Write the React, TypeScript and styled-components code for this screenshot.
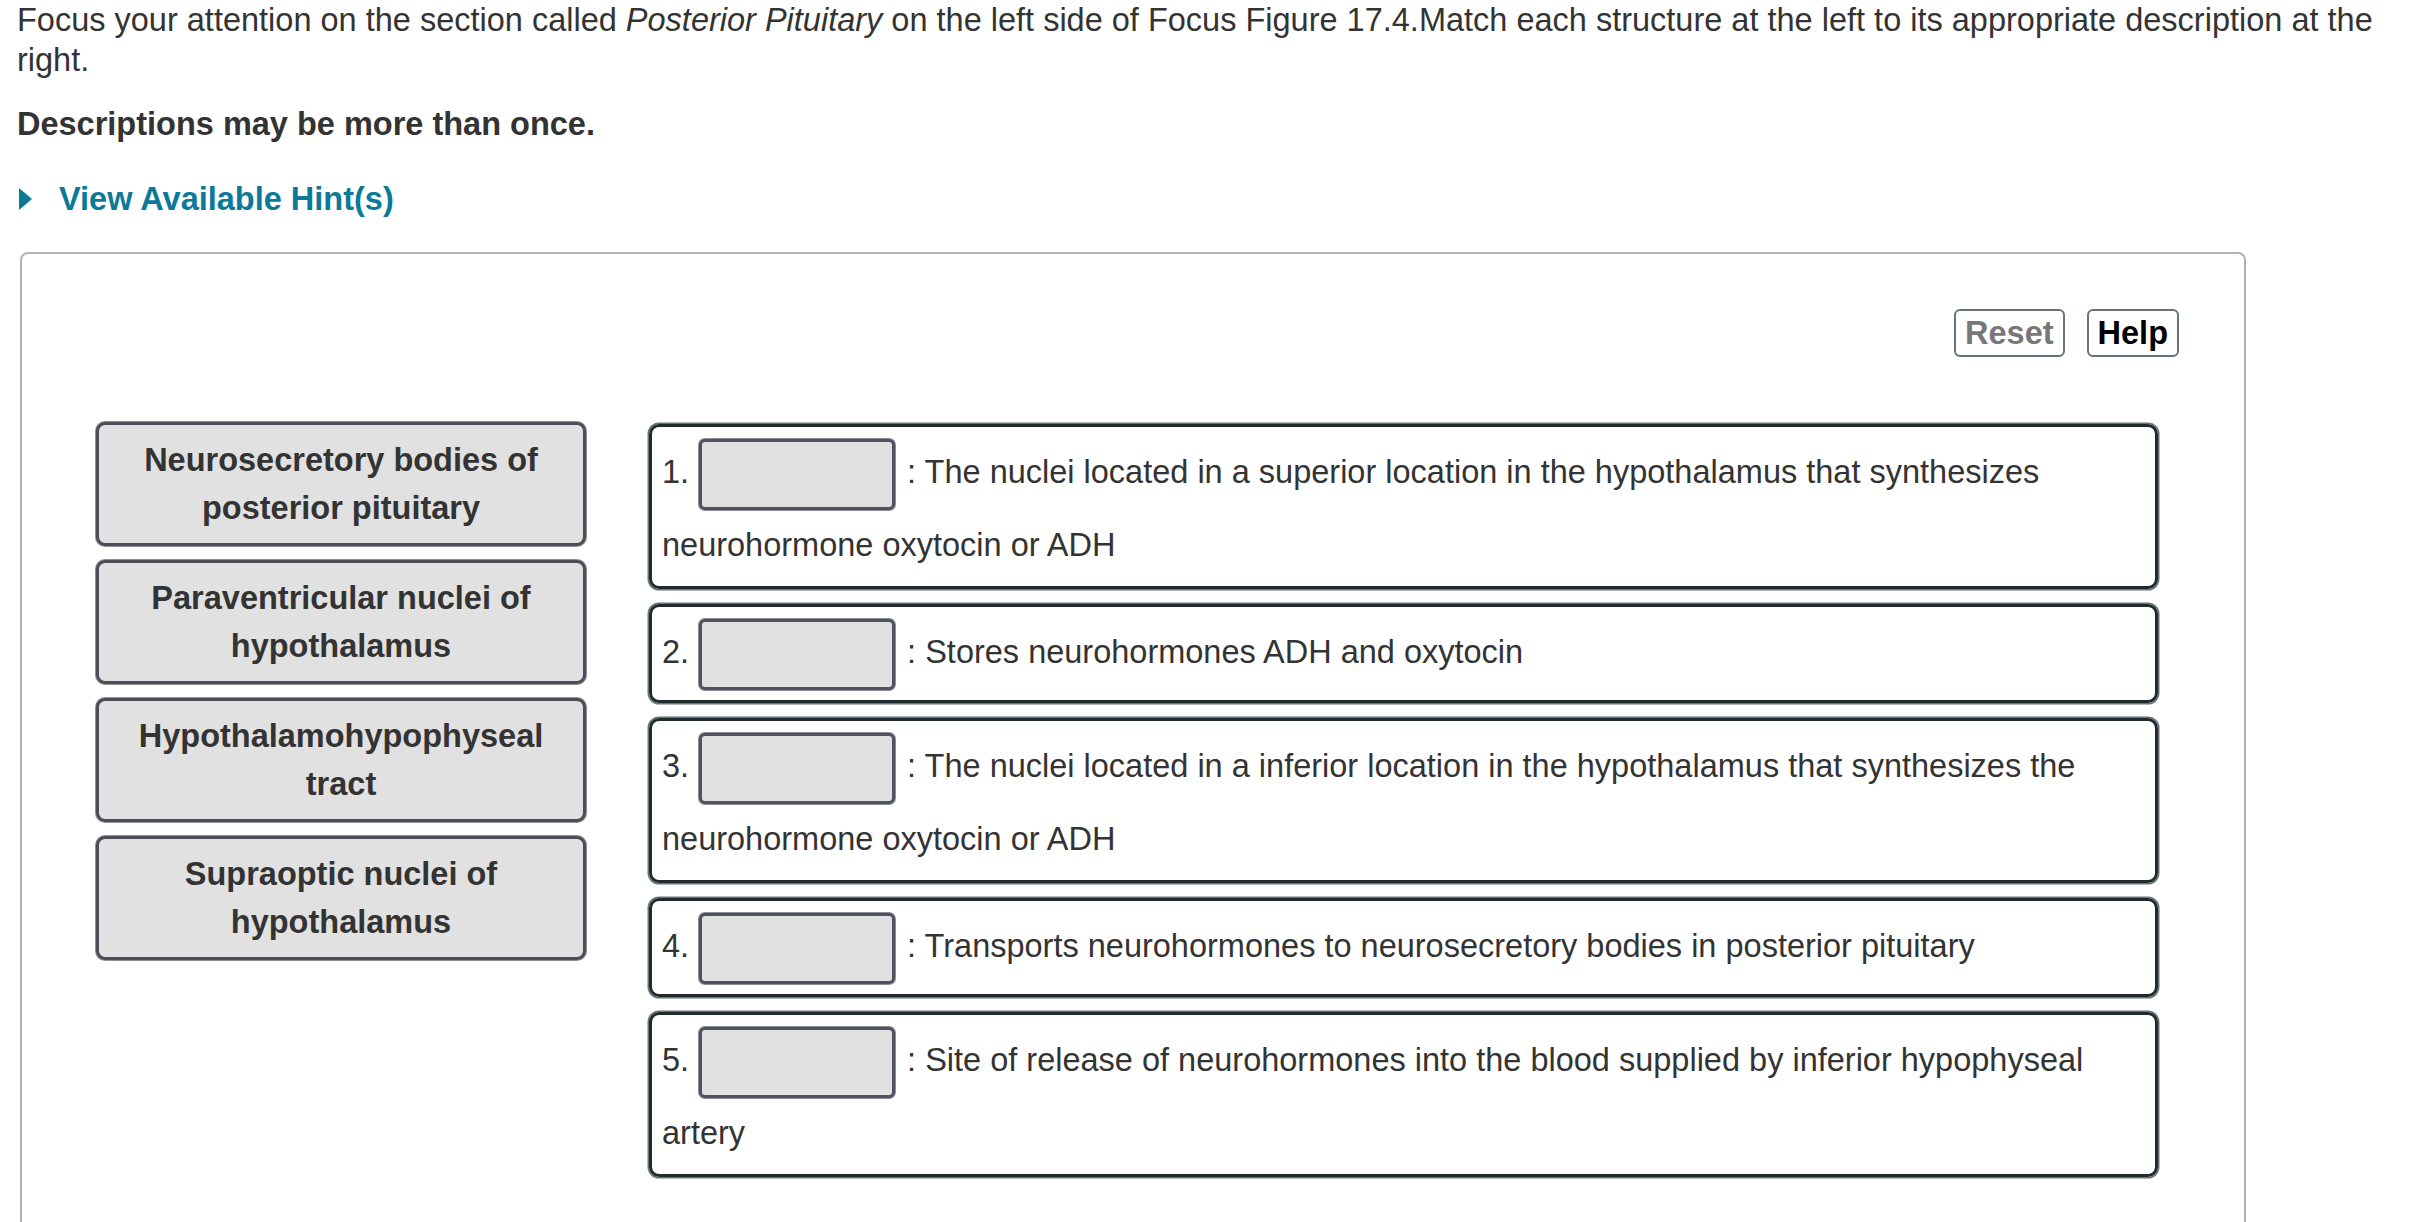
import React from "react";
import styled, { createGlobalStyle } from "styled-components";

const Global = createGlobalStyle`
  html, body { margin: 0; padding: 0; background: #fff; }
  body { font-family: "Liberation Sans", Arial, Helvetica, sans-serif; }
`;

const Page = styled.div`
  padding: 0 18px 0 17px;
  font-family: "Liberation Sans", Arial, Helvetica, sans-serif;
  color: #333;
  font-size: 32.5px;
  line-height: 40px;
  height: 1222px;
  overflow: hidden;
  box-sizing: border-box;
`;

const Intro = styled.p`
  margin: 0;
`;

const Note = styled.p`
  margin: 24px 0 0;
  font-weight: bold;
`;

const HintToggle = styled.div`
  display: flex;
  align-items: center;
  height: 40px;
  margin-top: 35px;
  color: #0a7a98;
  font-weight: bold;
  cursor: pointer;
`;

const HintText = styled.span`
  margin-left: 27px;
`;

const Panel = styled.div`
  margin: 33px 0 0 3px;
  width: 2226px;
  box-sizing: border-box;
  border: 2px solid #b3b3b3;
  border-bottom: none;
  border-radius: 8px 8px 0 0;
  padding: 55px 65px 300px 74px;
`;

const Toolbar = styled.div`
  display: flex;
  justify-content: flex-end;
  gap: 22px;
`;

const ToolButton = styled.button<{ $disabled?: boolean }>`
  height: 48px;
  padding: 0 9px;
  border: 2px solid #66757b;
  border-radius: 6px;
  background: #fff;
  font-family: "Liberation Sans", Arial, Helvetica, sans-serif;
  font-size: 32.5px;
  font-weight: bold;
  line-height: 44px;
  color: ${(p) => (p.$disabled ? "#777" : "#000")};
`;

const Board = styled.div`
  display: grid;
  grid-template-columns: 490px 1509px;
  column-gap: 63px;
  margin-top: 65px;
  align-items: start;
`;

const LabelColumn = styled.div`
  display: flex;
  flex-direction: column;
  gap: 14px;
`;

const Label = styled.div`
  box-sizing: border-box;
  border: 3px solid #4c4d56;
  box-shadow: 0 0 0 1px #8e8f98;
  border-radius: 9px;
  background: #e1e1e1;
  padding: 11px 6px;
  text-align: center;
  font-weight: bold;
  line-height: 48px;
  color: #333;
`;

const TargetColumn = styled.div`
  display: flex;
  flex-direction: column;
  gap: 15px;
  margin-top: 2px;
`;

const Card = styled.div`
  box-sizing: border-box;
  border: 3px solid #222a2d;
  box-shadow: 0 0 0 1.5px #66747a;
  border-radius: 10px;
  padding: 10px 10px 8px 10px;
  line-height: 66px;
  color: #333;
`;

const DropBox = styled.span`
  display: inline-block;
  vertical-align: middle;
  box-sizing: border-box;
  width: 196px;
  height: 71px;
  margin: 2px 12px 2px 10px;
  background: #e1e1e1;
  border: 3px solid #50525f;
  box-shadow: 0 0 0 1px #8c8d9b;
  border-radius: 6px;
`;

const labels = [
  ["Neurosecretory bodies of", "posterior pituitary"],
  ["Paraventricular nuclei of", "hypothalamus"],
  ["Hypothalamohypophyseal", "tract"],
  ["Supraoptic nuclei of", "hypothalamus"],
];

const targets = [
  "The nuclei located in a superior location in the hypothalamus that synthesizes neurohormone oxytocin or ADH",
  "Stores neurohormones ADH and oxytocin",
  "The nuclei located in a inferior location in the hypothalamus that synthesizes the neurohormone oxytocin or ADH",
  "Transports neurohormones to neurosecretory bodies in posterior pituitary",
  "Site of release of neurohormones into the blood supplied by inferior hypophyseal artery",
];

export default function App() {
  return (
    <>
      <Global />
      <Page>
        <Intro>
          Focus your attention on the section called <i>Posterior Pituitary</i> on the left side of Focus
          Figure 17.4.Match each structure at the left to its appropriate description at the right.
        </Intro>
        <Note>Descriptions may be more than once.</Note>
        <HintToggle>
          <svg width="13" height="22" viewBox="0 0 13 22" style={{ marginLeft: 2 }}>
            <polygon points="0,0 13,11 0,22" fill="#0a7a98" />
          </svg>
          <HintText>View Available Hint(s)</HintText>
        </HintToggle>
        <Panel>
          <Toolbar>
            <ToolButton $disabled>Reset</ToolButton>
            <ToolButton>Help</ToolButton>
          </Toolbar>
          <Board>
            <LabelColumn>
              {labels.map((l, i) => (
                <Label key={i}>
                  {l[0]}
                  <br />
                  {l[1]}
                </Label>
              ))}
            </LabelColumn>
            <TargetColumn>
              {targets.map((t, i) => (
                <Card key={i}>
                  {i + 1}.<DropBox />: {t}
                </Card>
              ))}
            </TargetColumn>
          </Board>
        </Panel>
      </Page>
    </>
  );
}
